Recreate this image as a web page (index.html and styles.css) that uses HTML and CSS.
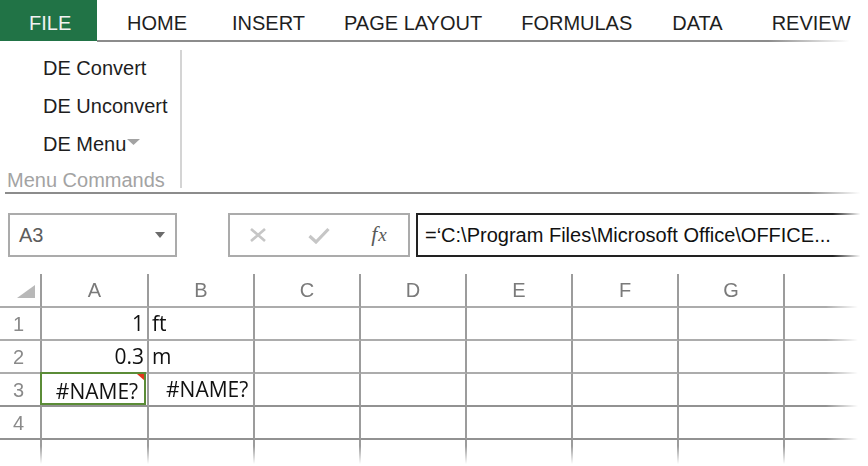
FILE: index.html
```html
<!DOCTYPE html>
<html>
<head>
<meta charset="utf-8">
<link rel="stylesheet" href="styles.css">
</head>
<body>
<div class="tabs">
  <div class="file">FILE</div>
  <div class="tablist">
    <span class="tab t-home">HOME</span>
    <span class="tab t-insert">INSERT</span>
    <span class="tab t-page">PAGE LAYOUT</span>
    <span class="tab t-form">FORMULAS</span>
    <span class="tab t-data">DATA</span>
    <span class="tab t-review">REVIEW</span>
  </div>
</div>

<div class="ribbon">
  <div class="group">
    <div class="cmd">DE Convert</div>
    <div class="cmd">DE Unconvert</div>
    <div class="cmd">DE Menu<svg class="menu-caret" width="13" height="6" viewBox="0 0 13 6"><polygon points="0,0 13,0 6.5,6" fill="#a3a3a3"/></svg></div>
    <div class="group-label">Menu Commands</div>
  </div>
  <div class="sep"></div>
</div>

<div class="formula-row">
  <div class="namebox">
    <span class="nb-text">A3</span>
    <svg width="10" height="6" viewBox="0 0 10 6"><polygon points="0,0 10,0 5,6" fill="#6b6b6b"/></svg>
  </div>
  <div class="fbuttons">
    <span class="fbtn"><svg width="18" height="16" viewBox="0 0 18 16"><path d="M2 2 L16 14 M16 2 L2 14" stroke="#c6c6c6" stroke-width="2.6" fill="none"/></svg></span>
    <span class="fbtn"><svg width="22" height="17" viewBox="0 0 22 17"><path d="M1.5 9 L8 15 L20.5 2" stroke="#c6c6c6" stroke-width="3.2" fill="none"/></svg></span>
    <span class="fbtn fx"><span class="fx-f">f</span><span class="fx-x">x</span></span>
  </div>
  <div class="fbox">=‘C:\Program Files\Microsoft Office\OFFICE...</div>
</div>

<div class="sheet">
  <div class="grid">
    <div class="c corner"><svg width="40" height="32" viewBox="0 0 40 32"><polygon points="17,24 35,24 35,11" fill="#b8b8b8"/></svg></div>
    <div class="c colh">A</div>
    <div class="c colh">B</div>
    <div class="c colh">C</div>
    <div class="c colh">D</div>
    <div class="c colh">E</div>
    <div class="c colh">F</div>
    <div class="c colh">G</div>
    <div class="c colh"></div>

    <div class="c rowh">1</div>
    <div class="c num">1</div>
    <div class="c txt">ft</div>
    <div class="c"></div><div class="c"></div><div class="c"></div><div class="c"></div><div class="c"></div><div class="c"></div>

    <div class="c rowh">2</div>
    <div class="c num">0.3</div>
    <div class="c txt">m</div>
    <div class="c"></div><div class="c"></div><div class="c"></div><div class="c"></div><div class="c"></div><div class="c"></div>

    <div class="c rowh dark">3</div>
    <div class="c err sel dark">#NAME?</div>
    <div class="c err err-b dark">#NAME?</div>
    <div class="c dark"></div><div class="c dark"></div><div class="c dark"></div><div class="c dark"></div><div class="c dark"></div><div class="c dark"></div>

    <div class="c rowh dark">4</div>
    <div class="c dark"></div><div class="c dark"></div><div class="c dark"></div><div class="c dark"></div><div class="c dark"></div><div class="c dark"></div><div class="c dark"></div><div class="c dark"></div>

    <div class="c rowh"></div>
    <div class="c"></div><div class="c"></div><div class="c"></div><div class="c"></div><div class="c"></div><div class="c"></div><div class="c"></div><div class="c"></div>
  </div>
</div>
</body>
</html>
```

FILE: styles.css
```css
* { box-sizing: border-box; }

html, body {
  margin: 0;
  padding: 0;
}

body {
  width: 868px;
  height: 466px;
  overflow: hidden;
  background: #ffffff;
  font-family: "Liberation Sans", Arial, sans-serif;
  font-size: 20px;
  color: #1e1e1e;
}

/* ---------- tabs ---------- */
.tabs {
  display: flex;
  height: 42px;
}

.file {
  width: 97px;
  height: 41px;
  background: #217346;
  color: #f2f2f2;
  padding-left: 29px;
  padding-top: 11px;
  line-height: 24px;
}

.tablist {
  flex: 1;
  display: flex;
  padding-top: 11px;
  line-height: 24px;
  border-style: solid;
  border-width: 0 0 2px 0;
  border-image: linear-gradient(to right, #8c8c8c 0%, #8c8c8c 87%, rgba(140,140,140,0) 97.5%) 1;
}

.tab { white-space: nowrap; }
.t-home { margin-left: 30px; }
.t-insert { margin-left: 45px; }
.t-page { margin-left: 39px; }
.t-form { margin-left: 39px; }
.t-data { margin-left: 40px; }
.t-review { margin-left: 49px; }

/* ---------- ribbon ---------- */
.ribbon {
  display: flex;
  margin-left: 5px;
  height: 152px;
  border-style: solid;
  border-width: 0 0 2px 0;
  border-image: linear-gradient(to right, #8c8c8c 0%, #8c8c8c 93%, rgba(140,140,140,0) 99%) 1;
}

.group {
  width: 175px;
  padding-top: 7px;
}

.cmd {
  padding-left: 38px;
  line-height: 38px;
  height: 38px;
  white-space: nowrap;
}

.menu-caret {
  margin-left: 1px;
  vertical-align: 6px;
}

.group-label {
  margin-top: 4px;
  padding-left: 2px;
  line-height: 26px;
  color: #a3a3a3;
  white-space: nowrap;
}

.sep {
  width: 2px;
  background: #d4d4d4;
  margin-top: 8px;
  height: 138px;
}

/* ---------- formula row ---------- */
.formula-row {
  display: flex;
  margin-top: 19px;
  padding-left: 8px;
  height: 44px;
}

.namebox {
  width: 169px;
  height: 44px;
  border: 2px solid #ababab;
  display: flex;
  align-items: center;
  justify-content: space-between;
  padding: 0 10px 0 9px;
  color: #5c5c5c;
}

.fbuttons {
  margin-left: 51px;
  width: 182px;
  height: 44px;
  border: 2px solid #ababab;
  display: grid;
  grid-template-columns: 56px 66px 54px;
  align-items: center;
}

.fbtn {
  display: flex;
  justify-content: center;
  align-items: center;
}

.fx {
  align-items: baseline;
  font-family: "Liberation Serif", "Times New Roman", serif;
  font-style: italic;
  color: #5a5a5a;
  line-height: 24px;
  padding-bottom: 2px;
}

.fx-f {
  font-size: 22px;
}

.fx-x {
  font-size: 19px;
  margin-left: 1px;
}

.fbox {
  margin-left: 6px;
  margin-right: -12px;
  flex: 1;
  height: 44px;
  border: 2px solid #222;
  border-image: linear-gradient(to right, #222 0%, #222 90%, rgba(34,34,34,0) 96%) 1;
  padding-left: 7px;
  display: flex;
  align-items: center;
  color: #111;
  white-space: nowrap;
}

/* ---------- sheet ---------- */
.sheet {
  margin-top: 17px;
  -webkit-mask-image: linear-gradient(to right, #000 0, #000 826px, transparent 858px);
  mask-image: linear-gradient(to right, #000 0, #000 826px, transparent 858px);
}

.grid {
  display: grid;
  grid-template-columns: 42px 107px repeat(7, 106px);
  grid-template-rows: 34px repeat(5, 33px);
  width: 891px;
  height: 200px;
  -webkit-mask-image: linear-gradient(to bottom, #000 0, #000 172px, transparent 190px);
  mask-image: linear-gradient(to bottom, #000 0, #000 172px, transparent 190px);
}

.c {
  position: relative;
  border-right: 2px solid #9c9c9c;
  border-bottom: 2px solid #acacac;
  font-family: "Open Sans", "Noto Sans", sans-serif;
  font-size: 21px;
  line-height: 31px;
  color: #111;
  white-space: nowrap;
}

.c.dark { border-bottom-color: #929292; }

.corner { padding: 0; }
.corner svg { display: block; }

.colh {
  font-family: "Liberation Sans", Arial, sans-serif;
  font-size: 20px;
  line-height: 32px;
  text-align: center;
  color: #7a7a7a;
}

.rowh {
  font-family: "Liberation Sans", Arial, sans-serif;
  font-size: 20px;
  line-height: 31px;
  padding-top: 1px;
  padding-left: 13px;
  color: #8a8a8a;
}

.num {
  text-align: right;
  padding-right: 3px;
}

.txt {
  padding-left: 3px;
}

.err {
  text-align: center;
  padding-left: 5px;
}

.err-b {
  padding-left: 17px;
  text-align: left;
}

.sel {
  padding-top: 2px;
}

.sel::after {
  content: "";
  position: absolute;
  left: -2px;
  top: -2px;
  right: 1px;
  bottom: 0;
  border: 2px solid #5b8c37;
  pointer-events: none;
}

.sel::before {
  content: "";
  position: absolute;
  top: 0;
  right: 2px;
  width: 0;
  height: 0;
  border-top: 7px solid #e2361c;
  border-left: 8px solid transparent;
}
```
